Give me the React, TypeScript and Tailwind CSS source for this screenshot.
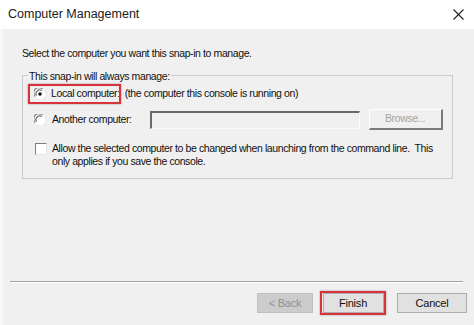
import React from 'react';

function Radio({ checked }: { checked?: boolean }) {
  return (
    <svg width="12" height="12" viewBox="0 0 12 12" className="shrink-0">
      <circle cx="6" cy="6" r="5.5" fill="#ffffff" />
      <path d="M1.2 8.5 A5 5 0 0 1 8.5 1.2" stroke="#8a8a8a" strokeWidth="1.3" fill="none" />
      <path d="M2.4 7.6 A3.8 3.8 0 0 1 7.6 2.4" stroke="#3f3f3f" strokeWidth="1" fill="none" />
      <path d="M10.8 3.5 A5 5 0 0 1 3.5 10.8" stroke="#e8e8e8" strokeWidth="1.2" fill="none" />
      {checked && <circle cx="6" cy="6" r="1.8" fill="#111111" />}
    </svg>
  );
}

export default function App() {
  return (
    <div className="relative flex h-[325px] w-[474px] flex-col overflow-hidden bg-white font-['Liberation_Sans',Arial,sans-serif] text-[10.5px] tracking-[-0.4px] text-[#111]">
      {/* title bar */}
      <div className="flex h-[29px] shrink-0 items-center justify-between bg-white pl-[8px] pr-[10px] tracking-normal">
        <span className="text-[12.5px] text-[#1a1a1a]">Computer Management</span>
        <svg width="11" height="11" viewBox="0 0 11 11">
          <path d="M0.5 0.5 L10.5 10.5 M10.5 0.5 L0.5 10.5" stroke="#222" strokeWidth="1.1" />
        </svg>
      </div>

      {/* body */}
      <div className="flex flex-1 flex-col border-l-[3px] border-[#f8f8f8] bg-[#f0f0f0]">
        <div className="mt-[17px] pl-[19px]">Select the computer you want this snap-in to manage.</div>

        <fieldset className="mb-0 ml-[19px] mr-[21px] mt-[8px] h-[109px] border border-[#cbcbcb] px-0 pt-0">
          <legend className="ml-[5px] px-[1px] leading-[12px]">This snap-in will always manage:</legend>

          {/* local */}
          <div className="mt-[2px] flex h-[20px] items-center">
            <div className="relative ml-[5px] flex h-[20px] items-center pl-[6px] pr-[1px]">
              <div className="absolute inset-0 border-2 border-[#d8333b] shadow-[0_0_2px_rgba(0,0,0,0.35)]" />
              <Radio checked />
              <span className="ml-[5px]">Local computer:</span>
            </div>
            <span className="ml-[4px]">(the computer this console is running on)</span>
          </div>

          {/* another */}
          <div className="mt-[5px] flex h-[22px] items-center">
            <div className="ml-[11px] flex items-center">
              <Radio />
              <span className="ml-[6px]">Another computer:</span>
            </div>
            <div className="ml-[18px] h-[18px] w-[210px] border-l-2 border-t-2 border-b border-r border-l-[#6a6a6a] border-t-[#6a6a6a] border-b-[#fafafa] border-r-[#fafafa] bg-[#f0f0f0]" />
            <div className="ml-[9px] flex h-[21px] w-[74px] items-center justify-center border border-b-2 border-r-2 border-l-white border-t-white border-b-[#7a7a7a] border-r-[#7a7a7a] bg-[#f0f0f0] text-[#a3a3a3]">
              Browse...
            </div>
          </div>

          {/* checkbox */}
          <div className="mt-[11px] flex items-start">
            <div className="ml-[12px] mt-[1px] h-[12px] w-[12px] shrink-0 border-l border-t border-b border-r border-l-[#7d7d7d] border-t-[#7d7d7d] border-b-[#e6e6e6] border-r-[#e6e6e6] bg-white" />
            <div className="ml-[5px] whitespace-pre leading-[13px]">
              {'Allow the selected computer to be changed when launching from the command line.  This\nonly applies if you save the console.'}
            </div>
          </div>
        </fieldset>

        <div className="flex-1" />

        {/* separator */}
        <div className="ml-[7px] mr-[11px] h-[2px] border-t border-b border-t-[#a0a0a0] border-b-white" />

        {/* buttons */}
        <div className="mb-[10px] mt-[8px] flex items-center justify-end pr-[7px] text-[11px] tracking-[-0.2px]">
          <div className="flex h-[20px] w-[56px] items-center justify-center border border-[#bfbfbf] bg-[#cccccc] text-[#8f8f8f]">&lt; Back</div>
          <div className="relative ml-[7px] flex h-[24px] w-[66px] items-center justify-center">
            <div className="absolute inset-0 border-2 border-[#d8333b] shadow-[0_0_2px_rgba(0,0,0,0.35)]" />
            <div className="flex h-[20px] w-[61px] items-center justify-center border border-[#adadad] bg-[#e1e1e1]">Finish</div>
          </div>
          <div className="ml-[11px] flex h-[20px] w-[70px] items-center justify-center border border-[#adadad] bg-[#e1e1e1]">Cancel</div>
        </div>
      </div>
    </div>
  );
}
